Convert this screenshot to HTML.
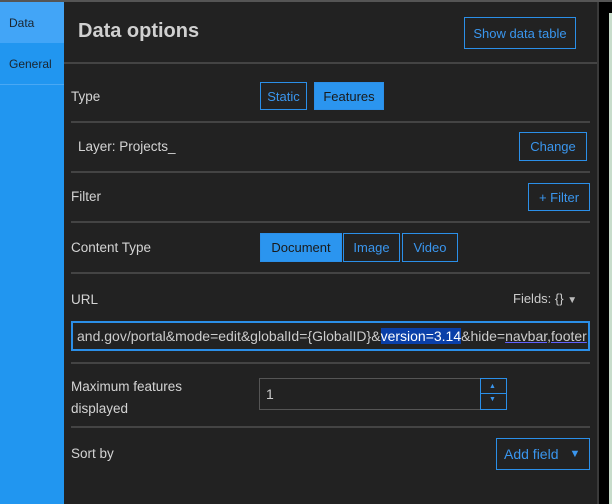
<!DOCTYPE html>
<html><head><style>
*{box-sizing:border-box;margin:0;padding:0}
body{width:612px;height:504px;background:#000;position:relative;overflow:hidden;font-family:"Liberation Sans",sans-serif;font-size:13px;color:#d8d8d8}
.a{position:absolute}
.sep{position:absolute;height:2px;background:#444}
.btn{position:absolute;border:1px solid #2b8fe8;color:#3a96ee;display:flex;align-items:center;justify-content:center;font-size:13px}
.fill{background:#2b95ef;color:#1a1a1a}
.lbl{position:absolute;font-size:13.5px;color:#d4d4d4}
</style></head><body>
<div class="a" style="left:0;top:0;width:612px;height:2px;background:#555"></div>
<div class="a" style="left:0;top:2px;width:64px;height:502px;background:#2196f0"></div>
<div class="a" style="left:0;top:2px;width:64px;height:41px;background:#42a5f7"></div>
<div class="a" style="left:0;top:84px;width:64px;height:1px;background:#4aa8f4"></div>
<div class="a" style="left:9px;top:16px;font-size:12px;color:#1a2530">Data</div>
<div class="a" style="left:9px;top:57px;font-size:12px;color:#1a2530">General</div>
<div class="a" style="left:64px;top:2px;width:533px;height:502px;background:#222"></div>
<div class="a" style="left:597px;top:2px;width:2px;height:502px;background:#3a3a3a"></div>
<div class="a" style="left:609px;top:13px;width:3px;height:491px;background:#c8dccb"></div>
<div class="a" style="left:78px;top:20px;font-size:20px;font-weight:bold;color:#d0d0d0">Data options</div>
<div class="btn" style="left:464px;top:17px;width:112px;height:32px">Show data table</div>
<div class="sep" style="left:64px;top:62px;width:533px"></div>
<div class="lbl" style="left:71px;top:89px">Type</div>
<div class="btn" style="left:260px;top:82px;width:47px;height:28px">Static</div>
<div class="btn fill" style="left:314px;top:82px;width:70px;height:28px">Features</div>
<div class="sep" style="left:71px;top:121px;width:519px"></div>
<div class="lbl" style="left:78px;top:139px">Layer: Projects_</div>
<div class="btn" style="left:519px;top:132px;width:68px;height:29px">Change</div>
<div class="sep" style="left:71px;top:171px;width:519px"></div>
<div class="lbl" style="left:71px;top:189px">Filter</div>
<div class="btn" style="left:528px;top:183px;width:62px;height:28px">+ Filter</div>
<div class="sep" style="left:71px;top:221px;width:519px"></div>
<div class="lbl" style="left:71px;top:240px">Content Type</div>
<div class="btn fill" style="left:260px;top:233px;width:82px;height:29px">Document</div>
<div class="btn" style="left:343px;top:233px;width:57px;height:29px">Image</div>
<div class="btn" style="left:402px;top:233px;width:56px;height:29px">Video</div>
<div class="sep" style="left:71px;top:272px;width:519px"></div>
<div class="lbl" style="left:71px;top:292px">URL</div>
<div class="a" style="left:513px;top:291px;font-size:13px;color:#ccc">Fields: {} <span style="font-size:10px;color:#bbb">&#9660;</span></div>
<div class="a" style="left:71px;top:321px;width:519px;height:30px;border:2px solid #2b8fe8;padding:5px 0 0 4px;font-size:14px;color:#ccc;white-space:nowrap;overflow:hidden">and.gov/portal&amp;mode=edit&amp;globalId={GlobalID}&amp;<span style="background:#0a3fa8;color:#fff">version=3.14</span>&amp;hide=<span style="text-decoration:underline;text-decoration-color:#6060ff">navbar,footer</span></div>
<div class="sep" style="left:71px;top:362px;width:519px"></div>
<div class="lbl" style="left:71px;top:376px;line-height:22px">Maximum features<br>displayed</div>
<div class="a" style="left:259px;top:378px;width:248px;height:32px;border:1px solid #555"></div>
<div class="a" style="left:266px;top:386px;font-size:14px;color:#ccc">1</div>
<div class="a" style="left:480px;top:378px;width:27px;height:32px;border:1px solid #2b8fe8"></div>
<div class="a" style="left:480px;top:393px;width:27px;height:1px;background:#2b8fe8"></div>
<div class="a" style="left:489px;top:383px;font-size:7px;color:#3a96ee">&#9650;</div>
<div class="a" style="left:489px;top:396px;font-size:7px;color:#3a96ee">&#9660;</div>
<div class="sep" style="left:71px;top:426px;width:519px"></div>
<div class="lbl" style="left:71px;top:446px">Sort by</div>
<div class="btn" style="left:496px;top:438px;width:94px;height:32px;justify-content:flex-start;padding-left:7px;font-size:14px">Add field <span style="font-size:11px;margin-left:11px">&#9660;</span></div>
</body></html>
